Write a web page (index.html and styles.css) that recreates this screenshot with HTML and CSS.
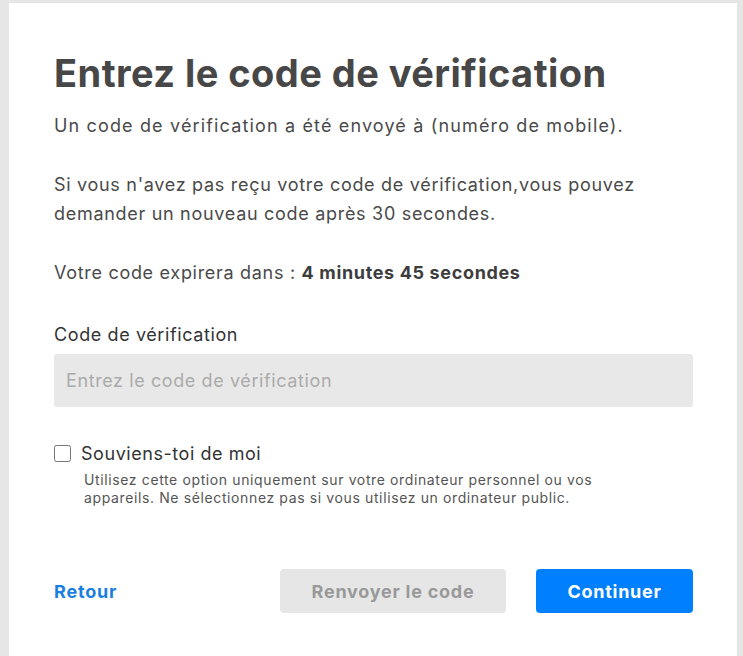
FILE: index.html
```html
<!DOCTYPE html>
<html lang="fr">
<head>
<meta charset="utf-8">
<title>Entrez le code de vérification</title>
<link rel="stylesheet" href="styles.css">
</head>
<body>
<main class="card">
  <h1 class="title">Entrez le code de vérification</h1>
  <p class="text first">Un code de vérification a été envoyé à (numéro de mobile).</p>
  <p class="text block">Si vous n'avez pas reçu votre code de vérification,vous pouvez<br>demander un nouveau code après 30 secondes.</p>
  <p class="text block">Votre code expirera dans : <strong>4 minutes 45 secondes</strong></p>
  <label class="label" for="code">Code de vérification</label>
  <input class="input" id="code" type="text" placeholder="Entrez le code de vérification">
  <div class="remember">
    <label class="check-row"><input type="checkbox" class="check"><span>Souviens-toi de moi</span></label>
    <p class="hint">Utilisez cette option uniquement sur votre ordinateur personnel ou vos<br>appareils. Ne sélectionnez pas si vous utilisez un ordinateur public.</p>
  </div>
  <div class="actions">
    <a class="back" href="#">Retour</a>
    <div class="buttons">
      <button class="btn btn-grey" type="button">Renvoyer le code</button>
      <button class="btn btn-blue" type="button">Continuer</button>
    </div>
  </div>
</main>
</body>
</html>
```
FILE: styles.css
```css
html, body { margin: 0; padding: 0; }
body {
  background: #e6e6e6;
  font-family: Inter, "Liberation Sans", sans-serif;
  color: #4a4a4a;
  height: 656px;
  overflow: hidden;
}
.card {
  background: #fff;
  margin: 3px 6px 0 9px;
  padding: 48px 44px 0 45px;
  height: 653px;
  box-sizing: border-box;
  overflow: hidden;
}
.title {
  margin: 0;
  font-size: 38px;
  line-height: 44px;
  font-weight: 700;
  color: #474747;
  letter-spacing: 0.45px;
}
.text {
  margin: 0;
  font-size: 18px;
  line-height: 29px;
  letter-spacing: 0.7px;
}
.first { margin-top: 16px; letter-spacing: 1.15px; }
.block { margin-top: 30px; }
.text strong { font-weight: 700; color: #3d3d3d; letter-spacing: 0.65px; }
.label {
  display: block;
  margin-top: 37px;
  font-size: 18px;
  line-height: 22px;
  letter-spacing: 0.6px;
  color: #333;
}
.input {
  display: block;
  box-sizing: border-box;
  width: 100%;
  height: 53px;
  margin-top: 8px;
  border: 0;
  border-radius: 3px;
  background: #e8e8e8;
  padding: 0 12px;
  font-family: inherit;
  font-size: 18px;
  letter-spacing: 0.6px;
  color: #333;
}
.input::placeholder { color: #ababab; }
.remember { margin-top: 36px; }
.check-row {
  display: flex;
  align-items: center;
  gap: 10px;
  font-size: 18px;
  letter-spacing: 0.55px;
  color: #333;
}
.check {
  margin: 0;
  width: 17px;
  height: 17px;
}
.hint {
  margin: 7px 0 0 30px;
  font-size: 14px;
  line-height: 18px;
  letter-spacing: 0.62px;
  color: #555;
}
.actions {
  margin-top: 62px;
  display: flex;
  align-items: center;
  justify-content: space-between;
}
.back {
  font-size: 18px;
  font-weight: 700;
  letter-spacing: 0.8px;
  color: #1a7fe0;
  text-decoration: none;
}
.buttons { display: flex; gap: 30px; }
.btn {
  height: 44px;
  border: 0;
  border-radius: 4px;
  font-family: inherit;
  font-size: 18px;
  font-weight: 700;
  letter-spacing: 0.75px;
}
.btn-grey { width: 226px; background: #e6e6e6; color: #999; }
.btn-blue { width: 157px; background: #0080ff; color: #fff; }
```
